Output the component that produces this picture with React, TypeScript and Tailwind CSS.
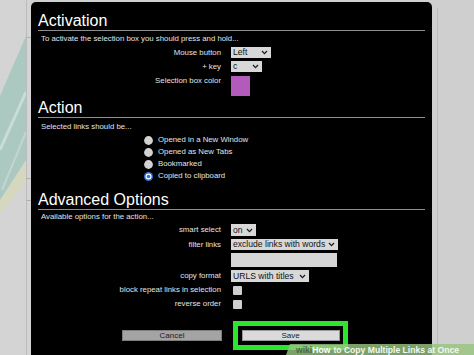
import type { ReactNode } from "react";

const font = { fontFamily: '"Liberation Sans", Arial, sans-serif' };

function Chevron() {
  return (
    <svg width="7" height="5" viewBox="0 0 7 5" className="shrink-0">
      <polyline points="1,1 3.5,3.6 6,1" fill="none" stroke="#1c1c1c" strokeWidth="1.3" />
    </svg>
  );
}

function Select({ value, width }: { value: string; width: string }) {
  return (
    <div className={`${width} flex h-full items-center justify-between bg-[#d8d8d8] pl-[2px] pr-[3px] text-[8.6px] text-[#111]`}>
      <span className="leading-none">{value}</span>
      <Chevron />
    </div>
  );
}

function Heading({ children, className = "" }: { children: ReactNode; className?: string }) {
  return (
    <div className={`border-b border-[#8e8e8e] pb-[2px] text-[16px] leading-[15px] text-white ${className}`}>
      {children}
    </div>
  );
}

function Note({ children, className = "" }: { children: ReactNode; className?: string }) {
  return <div className={`pl-[3px] text-[7.8px] leading-[10px] text-[#e4e4e4] ${className}`}>{children}</div>;
}

type RowProps = {
  label: string;
  className: string;
  children: ReactNode;
  top?: boolean;
};

function Row({ label, className, children, top }: RowProps) {
  return (
    <div className={`flex ${top ? "items-start" : "items-center"} ${className}`}>
      <div className="w-[183px] text-right text-[7.8px] leading-[10px] text-[#e4e4e4]">{label}</div>
      <div className="ml-[10px] flex h-full items-center">{children}</div>
    </div>
  );
}

function Radio({ label, checked }: { label: string; checked?: boolean }) {
  return (
    <div className="flex h-[12px] items-center pl-[106px]">
      <svg width="9" height="9" viewBox="0 0 9 9" className="shrink-0">
        {checked ? (
          <>
            <circle cx="4.5" cy="4.5" r="4.5" fill="#2d6fd9" />
            <circle cx="4.5" cy="4.5" r="3" fill="#ffffff" />
            <circle cx="4.5" cy="4.5" r="1.8" fill="#2d6fd9" />
          </>
        ) : (
          <circle cx="4.5" cy="4.5" r="4.4" fill="#d2d2d2" />
        )}
      </svg>
      <span className="ml-[5px] text-[7.8px] leading-[10px] text-[#e4e4e4]">{label}</span>
    </div>
  );
}

function Checkbox() {
  return <div className="ml-[2px] h-[9px] w-[9px] rounded-[1px] bg-[#cfcfcf]" />;
}

export default function App() {
  return (
    <div className="relative flex h-[355px] w-[474px] overflow-hidden bg-[#cfcfcf]" style={font}>
      <div className="relative w-[31px] shrink-0 bg-[#d4d4d4]">
        <svg width="31" height="355" viewBox="0 0 31 355" className="block">
          <polygon points="26,36 26,168 0,214 0,96" fill="#abc8c1" />
          <polygon points="26,160 26,182 0,214 0,200" fill="#d6d7bf" />
          <polyline points="26,92 0,150" fill="none" stroke="#c9ddd8" strokeWidth="3" />
          <polyline points="26,132 2,190" fill="none" stroke="#c2d6cf" strokeWidth="2" />
          <rect x="26" y="0" width="1" height="355" fill="#bcbcbc" />
          <rect x="26" y="37" width="5" height="1" fill="#b0b0b0" />
          <rect x="26" y="178" width="5" height="1" fill="#b0b0b0" />
          <rect x="26" y="200" width="5" height="1" fill="#b0b0b0" />
        </svg>
      </div>

      <div className="mt-[2px] w-[401px] shrink-0 rounded-t-[5px] bg-black px-[7px] pt-[11px]">
        <Heading>Activation</Heading>
        <Note className="mt-[3px]">To activate the selection box you should press and hold...</Note>
        <Row label="Mouse button" className="mt-[3px] h-[11px]">
          <Select value="Left" width="w-[40px]" />
        </Row>
        <Row label="+ key" className="mt-[3px] h-[11px]">
          <Select value="c" width="w-[31px]" />
        </Row>
        <Row label="Selection box color" className="mt-[4px] h-[20px]" top>
          <div className="h-[20px] w-[19px] bg-[#b25bbd]" />
        </Row>

        <Heading className="mt-[4px]">Action</Heading>
        <Note className="mt-[4px]">Selected links should be...</Note>
        <div className="mt-[2px]">
          <Radio label="Opened in a New Window" />
          <Radio label="Opened as New Tabs" />
          <Radio label="Bookmarked" />
          <Radio label="Copied to clipboard" checked />
        </div>

        <Heading className="mt-[10px]">Advanced Options</Heading>
        <Note className="mt-[2px]">Available options for the action...</Note>
        <Row label="smart select" className="mt-[2px] h-[12px]">
          <Select value="on" width="w-[25px]" />
        </Row>
        <Row label="filter links" className="mt-[3px] h-[11px]">
          <Select value="exclude links with words" width="w-[107px]" />
        </Row>
        <Row label="" className="mt-[3px] h-[14px]">
          <div className="h-[14px] w-[106px] bg-[#d6d6d6]" />
        </Row>
        <Row label="copy format" className="mt-[3px] h-[12px]">
          <Select value="URLS with titles" width="w-[78px]" />
        </Row>
        <Row label="block repeat links in selection" className="mt-[2px] h-[12px]">
          <Checkbox />
        </Row>
        <Row label="reverse order" className="mt-[2px] h-[12px]">
          <Checkbox />
        </Row>

        <div className="mt-[11px] flex items-center">
          <div className="ml-[84px] flex h-[11px] w-[100px] items-center justify-center border border-[#7d7d7d] bg-[#a4a4a4] text-[8px] text-[#1a1a1a]">
            Cancel
          </div>
          <div className="ml-[11px] border-[5px] border-[#2ee52e] px-[3.5px] py-[4px]">
            <div className="flex h-[11px] w-[98px] items-center justify-center border border-[#9a9a9a] bg-[#dadada] text-[8px] text-[#1a1a1a]">
              Save
            </div>
          </div>
        </div>
      </div>

      <div className="relative flex-1">
        <div className="ml-[5px] mt-[8px] h-[338px] w-px bg-[#bdbdbd]" />
      </div>

      <div className="absolute left-[286px] top-[344px] flex h-[11px] w-[188px] items-start whitespace-nowrap bg-[rgba(150,196,128,0.82)] pl-[10px] pt-[0.5px] [clip-path:polygon(4px_0,100%_0,100%_100%,0_100%)]">
        <span className="text-[8.6px] font-bold leading-[10px] text-[#4a6842]">wiki</span>
        <span className="text-[8.6px] font-bold leading-[10px] text-white">How</span>
        <span className="ml-[3px] text-[8.6px] font-bold leading-[10px] text-[#f4f8f0]">to Copy Multiple Links at Once</span>
      </div>
    </div>
  );
}
